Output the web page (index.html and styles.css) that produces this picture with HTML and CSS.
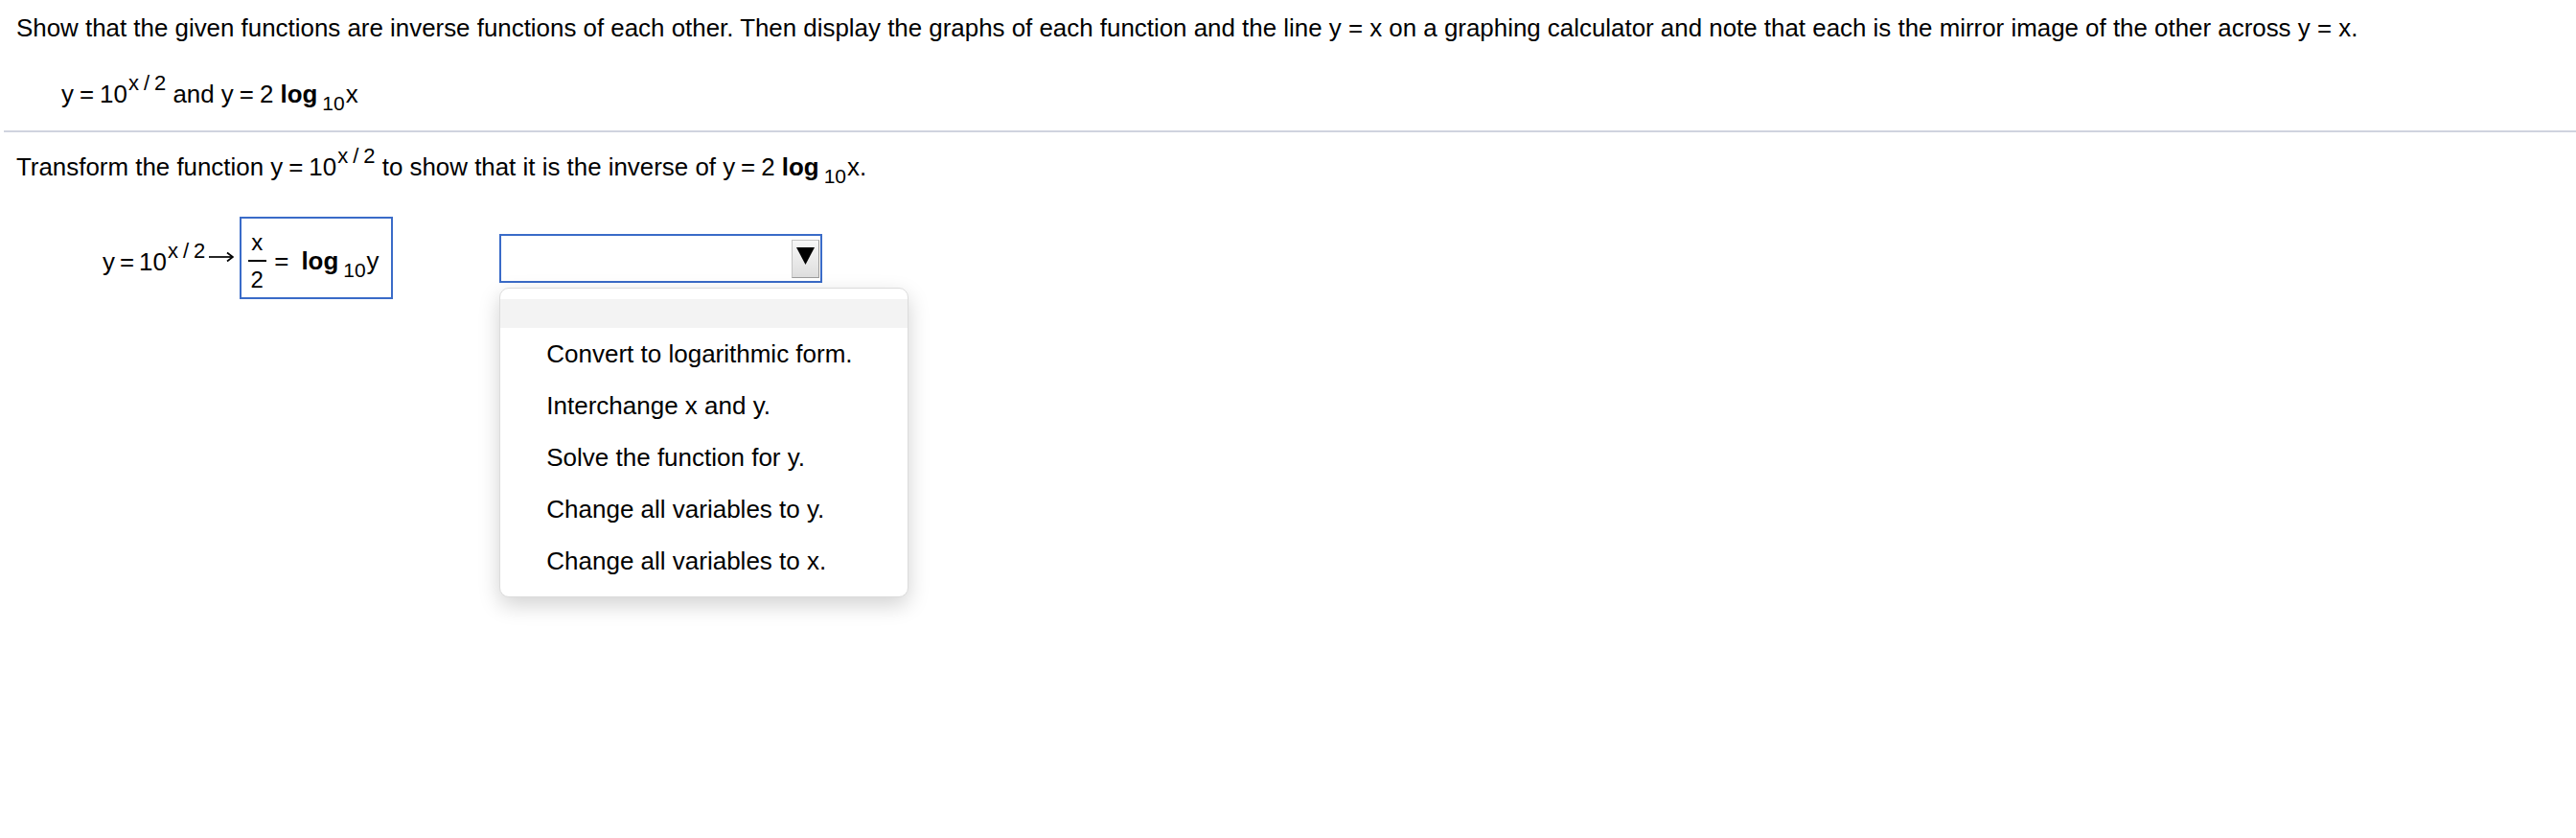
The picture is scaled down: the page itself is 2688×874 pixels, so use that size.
FILE: index.html
```html
<!DOCTYPE html>
<html lang="en">
<head>
<meta charset="utf-8">
<title>Inverse functions</title>
<link rel="stylesheet" href="styles.css">
</head>
<body>
<div class="page">
<div class="question">
  <p class="line">Show that the given functions are inverse functions of each other. Then display the graphs of each function and the line y = x on a graphing calculator and note that each is the mirror image of the other across y = x.</p>
  <p class="line given">y<span class="eq">=</span>10<sup>x<span class="sl">/</span>2</sup> and y<span class="eq">=</span>2 <b>log</b><sub>10</sub>x</p>
</div>
<hr class="rule">
<div class="work">
  <p class="line">Transform the function y<span class="eq">=</span>10<sup>x<span class="sl">/</span>2</sup> to show that it is the inverse of y<span class="eq">=</span>2 <b>log</b><sub>10</sub>x.</p>
  <div class="row">
    <span class="lhs">y<span class="eq">=</span>10<sup>x<span class="sl">/</span>2</sup><svg class="arr" width="26" height="12" viewBox="0 0 26 12"><line x1="0" y1="6" x2="25" y2="6" stroke="#000" stroke-width="1.7"/><polyline points="19,1.5 25,6 19,10.5" fill="none" stroke="#000" stroke-width="1.7"/></svg></span>
    <div class="box">
      <span class="frac"><span class="num">x</span><span class="bar"></span><span class="den">2</span></span>
      <span class="rhs"><span class="eq2">=</span><b>log</b><sub>10</sub>y</span>
    </div>
    <div class="select-wrap">
      <div class="select">
        <span class="btn"><svg width="19" height="18" viewBox="0 0 19 18"><polygon points="0,0 19,0 9.5,18" fill="#000"/></svg></span>
      </div>
      <ul class="menu">
        <li class="item blank"></li>
        <li class="item">Convert to logarithmic form.</li>
        <li class="item">Interchange x and y.</li>
        <li class="item">Solve the function for y.</li>
        <li class="item">Change all variables to y.</li>
        <li class="item">Change all variables to x.</li>
      </ul>
    </div>
  </div>
</div>
</div>
</body>
</html>
```
FILE: styles.css
```css
html, body {
  margin: 0;
  background: #fff;
}

body {
  color: #000;
  font-family: "Liberation Sans", Arial, Helvetica, sans-serif;
  font-size: 25.9px;
}

.page {
  min-height: 874px;
}

.question {
  padding: 14px 0 0 17px;
}

.line {
  margin: 0;
  line-height: 30px;
  white-space: nowrap;
}

.given {
  margin-top: 39px;
  padding-left: 47px;
}

.eq {
  margin: 0 6px;
}

sup {
  font-size: 22px;
  line-height: 0;
  vertical-align: 13px;
  margin-left: 1px;
}

.sl {
  margin: 0 5px;
}

sub {
  font-size: 21px;
  line-height: 0;
  vertical-align: -8px;
  margin: 0 1px 0 5px;
}

.rule {
  border: 0;
  height: 2px;
  background: #d0d3df;
  margin: 23px 0 0 4px;
}

.work {
  padding: 21px 0 0 17px;
}

.row {
  display: flex;
  align-items: flex-start;
  margin-top: 37px;
  padding-left: 90px;
}

.lhs {
  margin-top: 32px;
  line-height: 30px;
  white-space: nowrap;
}

.lhs .eq {
  margin: 0 5px;
}

.arr {
  margin-left: 4px;
  vertical-align: 8px;
}

.box {
  box-sizing: border-box;
  width: 160px;
  height: 86px;
  margin-left: 6px;
  border: 2px solid #3a6bc8;
  padding: 13px 0 0 6px;
  display: flex;
  align-items: flex-start;
}

.frac {
  display: flex;
  flex-direction: column;
  align-items: center;
  width: 20px;
  font-size: 24px;
  line-height: 23px;
}

.bar {
  width: 19px;
  height: 2px;
  background: #000;
  margin-top: 7px;
}

.den {
  margin-top: 7px;
}

.rhs {
  margin-top: 16px;
  line-height: 30px;
  white-space: nowrap;
}

.eq2 {
  margin: 0 13px 0 8px;
}

.rhs sub {
  margin-left: 5px;
}

.select-wrap {
  position: relative;
  margin-left: 111px;
  margin-top: 18px;
}

.select {
  box-sizing: border-box;
  width: 337px;
  height: 51px;
  border: 2px solid #3a6bc8;
  display: flex;
  justify-content: flex-end;
  align-items: center;
  padding-right: 1px;
}

.btn {
  box-sizing: border-box;
  width: 29px;
  height: 40px;
  display: flex;
  justify-content: center;
  align-items: flex-start;
  padding-top: 7px;
  background: linear-gradient(#f7f7f7, #dedede);
  border: 1px solid #c4c4c4;
  border-right-color: #9c9c9c;
  border-bottom-color: #9c9c9c;
}

.menu {
  position: absolute;
  left: 0;
  top: 56px;
  box-sizing: border-box;
  width: 427px;
  margin: 0;
  padding: 11px 0 10px;
  list-style: none;
  background: #fff;
  border: 1px solid #dcdcdc;
  border-radius: 10px;
  box-shadow: 0 8px 22px rgba(0, 0, 0, 0.18);
  font-size: 26px;
}

.item {
  height: 54px;
  line-height: 54px;
  padding-left: 48px;
  white-space: nowrap;
}

.item.blank {
  height: 30px;
  background: #f3f3f3;
}
```
